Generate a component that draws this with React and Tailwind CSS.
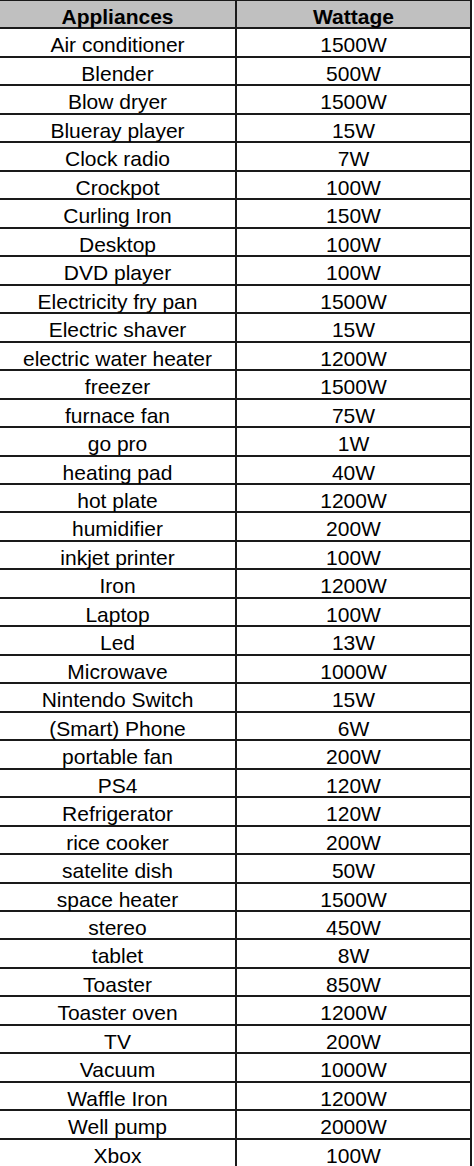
import React from 'react';

const rows = [
  ['Air conditioner', '1500W'],
  ['Blender', '500W'],
  ['Blow dryer', '1500W'],
  ['Blueray player', '15W'],
  ['Clock radio', '7W'],
  ['Crockpot', '100W'],
  ['Curling Iron', '150W'],
  ['Desktop', '100W'],
  ['DVD player', '100W'],
  ['Electricity fry pan', '1500W'],
  ['Electric shaver', '15W'],
  ['electric water heater', '1200W'],
  ['freezer', '1500W'],
  ['furnace fan', '75W'],
  ['go pro', '1W'],
  ['heating pad', '40W'],
  ['hot plate', '1200W'],
  ['humidifier', '200W'],
  ['inkjet printer', '100W'],
  ['Iron', '1200W'],
  ['Laptop', '100W'],
  ['Led', '13W'],
  ['Microwave', '1000W'],
  ['Nintendo Switch', '15W'],
  ['(Smart) Phone', '6W'],
  ['portable fan', '200W'],
  ['PS4', '120W'],
  ['Refrigerator', '120W'],
  ['rice cooker', '200W'],
  ['satelite dish', '50W'],
  ['space heater', '1500W'],
  ['stereo', '450W'],
  ['tablet', '8W'],
  ['Toaster', '850W'],
  ['Toaster oven', '1200W'],
  ['TV', '200W'],
  ['Vacuum', '1000W'],
  ['Waffle Iron', '1200W'],
  ['Well pump', '2000W'],
  ['Xbox', '100W'],
];

const Row = ({ left, right, header, last }) => (
  <div
    className={
      'grid grid-cols-[235px_1fr] flex-1 min-h-0 ' +
      (last ? '' : 'border-b-2 border-[#1a1a1a] ') +
      (header ? 'bg-[#c0c0c0] font-bold' : 'bg-white')
    }
  >
    <div className="text-center pt-[5px] leading-[22px] whitespace-nowrap overflow-visible">{left}</div>
    <div className="text-center pt-[5px] leading-[22px] whitespace-nowrap overflow-visible border-l-2 border-[#1a1a1a]">
      {right}
    </div>
  </div>
);

export default function App() {
  return (
    <div className="w-[474px] h-[1166px] bg-white overflow-hidden">
      <div
        className="w-[472px] h-[1166px] flex flex-col border-r-2 border-t border-[#1a1a1a] text-black text-[21px]"
        style={{ fontFamily: '"Liberation Sans", Arial, sans-serif' }}
      >
        <Row left="Appliances" right="Wattage" header />
        {rows.map(([a, w], i) => (
          <Row key={i} left={a} right={w} last={i === rows.length - 1} />
        ))}
      </div>
    </div>
  );
}
